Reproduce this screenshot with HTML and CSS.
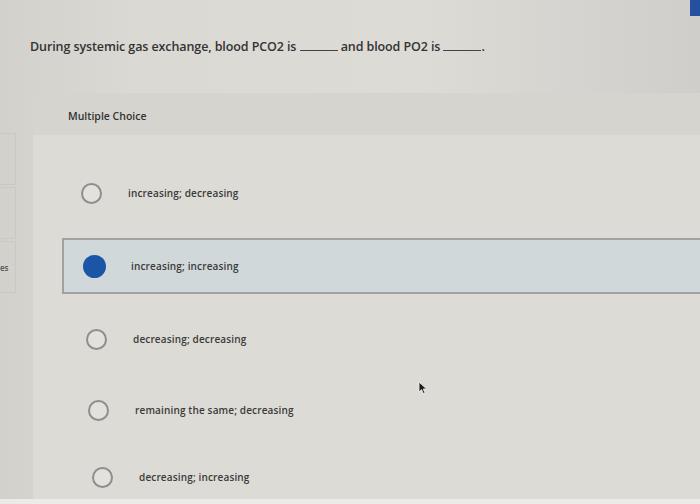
FILE: index.html
```html
<!DOCTYPE html>
<html lang="en">
<head>
  <meta charset="UTF-8">
  <title>Multiple Choice</title>
  <link rel="stylesheet" href="styles.css">
</head>
<body>
  <div class="screen">
    <div class="corner-tab"></div>

    <p class="question">
      During systemic gas exchange, blood PCO2 is <span class="blank"></span> and blood PO2 is <span class="blank"></span>.
    </p>

    <div class="layout">
      <div class="sidebar">
        <div class="side-box"></div>
        <div class="side-box"></div>
        <div class="side-box"><span>es</span></div>
      </div>

      <div class="panel">
        <div class="panel-header">Multiple Choice</div>
        <div class="options">
          <div class="option">
            <span class="radio"></span>
            <span class="option-text">increasing; decreasing</span>
          </div>
          <div class="option selected">
            <span class="radio"></span>
            <span class="option-text">increasing; increasing</span>
          </div>
          <div class="option">
            <span class="radio"></span>
            <span class="option-text">decreasing; decreasing</span>
          </div>
          <div class="option">
            <span class="radio"></span>
            <span class="option-text">remaining the same; decreasing</span>
          </div>
          <div class="option">
            <span class="radio"></span>
            <span class="option-text">decreasing; increasing</span>
          </div>
        </div>
      </div>
    </div>

    <svg class="cursor" width="10" height="14" viewBox="0 0 10 14">
      <path d="M1 1 L1 11 L3.5 8.6 L5.4 12.6 L7 11.8 L5.2 8 L8.6 8 Z" fill="#1e1e1e" stroke="#f2f2f2" stroke-width="0.8"/>
    </svg>
  </div>
</body>
</html>
```

FILE: styles.css
```css
:root {
  --bg: #d9d7d1;
  --panel: #dddbd5;
  --panel-head: #d5d4cf;
  --text: #3a3a3a;
  --radio-border: #8e8e8e;
  --selected-bg: #d0d8d9;
  --selected-border: #a0a2a1;
  --blue: #1b55a5;
}

* {
  margin: 0;
  padding: 0;
  box-sizing: border-box;
}

body {
  font-family: "Open Sans", Lato, sans-serif;
  background: var(--bg);
  color: var(--text);
  width: 700px;
  height: 504px;
  overflow: hidden;
}

.screen {
  position: relative;
  height: 504px;
  background: linear-gradient(to right, #d2d1cc 0%, #dbd9d3 20%, #dddbd5 60%, #cfcecb 100%);
  border-bottom: 5px solid #ecebe8;
}

.corner-tab {
  position: absolute;
  top: 0;
  right: 0;
  width: 10px;
  height: 16px;
  background: #2350a0;
}

.question {
  padding: 39px 0 0 30px;
  font-size: 12.5px;
  line-height: 16px;
  font-weight: 600;
  color: #333;
  letter-spacing: -0.1px;
}

.blank {
  display: inline-block;
  width: 38px;
  border-bottom: 1px solid #444;
  vertical-align: baseline;
}

.layout {
  display: flex;
  margin-top: 38px;
}

.sidebar {
  width: 16px;
  padding-top: 40px;
  display: flex;
  flex-direction: column;
  gap: 2px;
}

.side-box {
  height: 52px;
  border: 1px solid #c9c8c3;
  border-left: none;
  display: flex;
  align-items: center;
  font-size: 8px;
  color: #555;
  font-weight: 600;
  overflow: hidden;
}

.panel {
  flex: 1;
  margin-left: 17px;
  background: var(--panel);
  height: 406px;
}

.panel-header {
  height: 42px;
  background: var(--panel-head);
  padding: 16px 0 0 35px;
  font-size: 10.5px;
  font-weight: 600;
  color: #333;
  letter-spacing: 0;
}

.options {
  padding-top: 30px;
  display: flex;
  flex-direction: column;
  gap: 17px;
}

.option {
  height: 56px;
  margin-left: 29px;
  display: flex;
  align-items: center;
  padding-left: 17px;
  border: 2px solid transparent;
  border-right: none;
}

.option:nth-child(2) { margin-left: 29px; padding-left: 19px; }
.option:nth-child(3) { margin-left: 34px; }
.option:nth-child(4) { margin-left: 36px; margin-top: -2px; }
.option:nth-child(5) { margin-left: 40px; margin-top: -6px; }

.radio {
  width: 21px;
  height: 21px;
  border-radius: 50%;
  border: 2px solid var(--radio-border);
  background: #e2e1dc;
  flex-shrink: 0;
}

.option-text {
  margin-left: 26px;
  font-size: 10px;
  font-weight: 600;
  color: var(--text);
  letter-spacing: 0.15px;
}

.selected {
  background: var(--selected-bg);
  border-color: var(--selected-border);
}

.selected .radio {
  width: 23px;
  height: 23px;
  border: none;
  background: var(--blue);
}

.selected .option-text {
  margin-left: 25px;
}

.cursor {
  position: absolute;
  left: 418px;
  top: 381px;
}
```
